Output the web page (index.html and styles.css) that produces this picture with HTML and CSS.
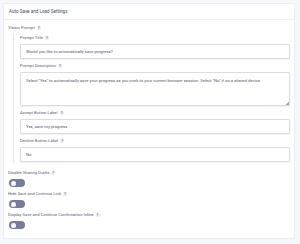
FILE: index.html
```html
<!DOCTYPE html>
<html lang="en">
<head>
    <meta charset="UTF-8">
    <meta name="viewport" content="width=device-width, initial-scale=1.0">
    <title>Auto Save and Load Settings</title>
    <link rel="stylesheet" href="styles.css">
</head>
<body>

    <div class="panel">
        <div class="panel-header">Auto Save and Load Settings</div>

        <div class="panel-body">
            <div class="label">Visitor Prompt <span class="help">?</span></div>

            <div class="group">
                <div class="field">
                    <div class="label">Prompt Title <span class="help">?</span></div>
                    <input type="text" class="input" value="Would you like to automatically save progress?">
                </div>

                <div class="field">
                    <div class="label">Prompt Description <span class="help">?</span></div>
                    <div class="textarea-wrap">
                        <textarea class="input textarea">Select "Yes" to automatically save your progress as you work to your current browser session. Select "No" if on a shared device.</textarea>
                        <span class="grip"></span>
                    </div>
                </div>

                <div class="field">
                    <div class="label">Accept Button Label <span class="help">?</span></div>
                    <input type="text" class="input" value="Yes, save my progress">
                </div>

                <div class="field">
                    <div class="label">Decline Button Label <span class="help">?</span></div>
                    <input type="text" class="input" value="No">
                </div>
            </div>

            <div class="toggle-field">
                <div class="label">Disable Sharing Drafts <span class="help">?</span></div>
                <div class="toggle"><span class="knob"></span></div>
            </div>

            <div class="toggle-field">
                <div class="label">Hide Save and Continue Link <span class="help">?</span></div>
                <div class="toggle"><span class="knob"></span></div>
            </div>

            <div class="toggle-field">
                <div class="label">Display Save and Continue Confirmation Inline <span class="help">?</span></div>
                <div class="toggle"><span class="knob"></span></div>
            </div>
        </div>
    </div>

</body>
</html>
```

FILE: styles.css
```css
body {
    font-family: Roboto, "Liberation Sans", Arial, sans-serif;
    background: #f5f7fb;
    color: #4a4d66;
    margin: 0;
    padding: 3px 5px 4px 3px;
}
.panel {
    background: white;
    border: 1px solid #eceef5;
    border-radius: 2px;
    height: 236px;
    box-sizing: border-box;
}
.panel-header {
    height: 16px;
    line-height: 15px;
    padding-left: 5px;
    font-size: 4.6px;
    color: #4a4d66;
    border-bottom: 1px solid #eef0f5;
    box-sizing: border-box;
}
.panel-body {
    padding: 5px 4px 0 4px;
}
.label {
    font-size: 4.2px;
    line-height: 6px;
    height: 6px;
    color: #5d6078;
    display: flex;
    align-items: center;
}
.help {
    display: inline-flex;
    align-items: center;
    justify-content: center;
    width: 4px;
    height: 4px;
    margin-left: 2px;
    border-radius: 50%;
    background: #e8eaf3;
    color: #7a7d95;
    font-size: 3px;
    font-weight: bold;
}
.group {
    margin: 2px 0 0 5px;
    padding: 2px 0 1px 6px;
    border-left: 1px solid #e3e5ee;
}
.field {
    margin-bottom: 4px;
}
.field:last-child {
    margin-bottom: 0;
}
.field .label {
    margin-bottom: 3px;
}
.input {
    display: block;
    width: 100%;
    height: 15px;
    margin: 0;
    padding: 0 5px;
    font-family: inherit;
    font-size: 4.2px;
    color: #55586f;
    background: white;
    border: 1px solid #d9dbe8;
    border-radius: 1px;
    box-shadow: 0 1px 1px rgba(18, 25, 97, 0.06);
    box-sizing: border-box;
    outline: none;
}
.textarea-wrap {
    position: relative;
}
.textarea {
    height: 34px;
    padding: 5px 5px;
    line-height: 6px;
    resize: none;
    overflow: hidden;
}
.grip {
    position: absolute;
    right: 1px;
    bottom: 1px;
    width: 3px;
    height: 3px;
    background: linear-gradient(135deg, transparent 50%, #a4a6b6 50%);
}
.toggle-field {
    margin-top: 4px;
}
.group + .toggle-field {
    margin-top: 7px;
}
.toggle-field .label {
    margin-bottom: 3px;
}
.toggle {
    width: 16px;
    height: 8px;
    margin-left: 1px;
    border-radius: 4px;
    background: #787b99;
    display: flex;
    align-items: center;
    padding-left: 1.5px;
    box-sizing: border-box;
}
.knob {
    width: 5px;
    height: 5px;
    border-radius: 50%;
    background: white;
    box-shadow: inset 0 0 0 1px #e2e3ec;
}
```
